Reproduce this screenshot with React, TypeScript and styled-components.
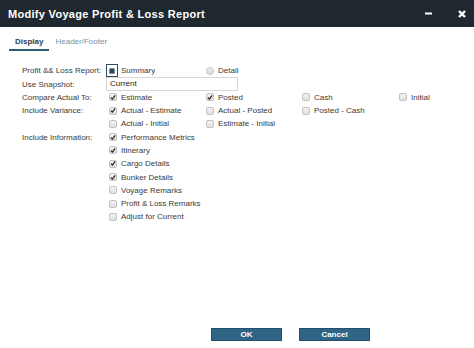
import styled, { createGlobalStyle } from "styled-components";

const GlobalStyle = createGlobalStyle`
  html, body {
    margin: 0;
    padding: 0;
    background: #fff;
  }
  body {
    font-family: "Liberation Sans", Arial, sans-serif;
    color: #3a3a3a;
  }
`;

const Window = styled.div`
  display: flex;
  flex-direction: column;
  width: 474px;
  height: 348px;
  background: #fff;
`;

const TitleBar = styled.div`
  display: flex;
  align-items: center;
  height: 27px;
  padding: 0 6px 0 8px;
  background: #1f282f;
  color: #fff;
`;

const Title = styled.h1`
  flex: 1;
  margin: 0;
  font-size: 11px;
  font-weight: 700;
  letter-spacing: 0.3px;
`;

const TitleButton = styled.button`
  all: unset;
  cursor: pointer;
  display: flex;
  align-items: center;
  justify-content: center;
  width: 12px;
  height: 12px;
  margin-left: 22px;
`;

const Tabs = styled.div`
  display: flex;
  padding: 10px 0 0 9px;
`;

const Tab = styled.div<{ $active?: boolean }>`
  padding: 0 6px 2px 6px;
  font-size: 8px;
  line-height: 10px;
  font-weight: ${({ $active }) => ($active ? 700 : 400)};
  color: ${({ $active }) => ($active ? "#2f4352" : "#7393aa")};
  border-bottom: 2px solid ${({ $active }) => ($active ? "#2b5c77" : "transparent")};
`;

const Form = styled.div`
  display: flex;
  flex-direction: column;
  padding: 13px 0 0 22px;
  font-size: 8px;
`;

const Row = styled.div`
  display: grid;
  grid-template-columns: 86px 97px 96px 97px 1fr;
  align-items: center;
  height: 13.3px;
`;

const Label = styled.span`
  color: #3a3a3a;
  white-space: nowrap;
`;

const Option = styled.label`
  display: flex;
  align-items: center;
  gap: 4px;
  padding-left: 1px;
  white-space: nowrap;
  color: #3a3a3a;
`;

const Box = styled.span`
  display: inline-flex;
  align-items: center;
  justify-content: center;
  box-sizing: border-box;
  width: 8px;
  height: 8px;
  border: 1px solid #c2c2c2;
  border-radius: 2px;
  background: linear-gradient(#f3f3f3, #dfdfdf);
`;

const Radio = styled.span`
  display: inline-block;
  box-sizing: border-box;
  width: 8px;
  height: 8px;
  border: 1px solid #c4c4c4;
  border-radius: 50%;
  background: linear-gradient(#f0f0f0, #d8d8d8);
`;

const FocusRing = styled.span`
  display: inline-flex;
  align-items: center;
  justify-content: center;
  box-sizing: border-box;
  width: 12px;
  height: 13px;
  margin-left: -3px;
  margin-right: -1px;
  border: 1.5px solid #2e4d61;
  background: #fff;
`;

const RadioDot = styled.span`
  display: inline-block;
  box-sizing: border-box;
  width: 6px;
  height: 6px;
  border-radius: 1px;
  background: #2e4556;
  border: 1px solid #7c8e9b;
`;

const TextInput = styled.div`
  box-sizing: border-box;
  width: 132px;
  height: 14px;
  margin-left: -2px;
  padding: 0 0 0 3px;
  border: 1px solid #d6d6d6;
  font-size: 8px;
  line-height: 12px;
  color: #222;
`;

const Spacer = styled.div`
  flex: 1;
`;

const Footer = styled.div`
  display: flex;
  gap: 17px;
  padding: 0 0 7px 211px;
`;

const Button = styled.button`
  all: unset;
  cursor: pointer;
  box-sizing: border-box;
  width: 71px;
  height: 13px;
  text-align: center;
  background: #2e6486;
  border: 1px solid #234f6a;
  color: #fff;
  font-size: 8px;
  font-weight: 700;
  line-height: 11px;
`;

function Check({ checked }: { checked?: boolean }) {
  return (
    <Box>
      {checked && (
        <svg width="7" height="7" viewBox="0 0 10 10">
          <path
            d="M1.5 5.2 L4 7.8 L8.6 1.6"
            fill="none"
            stroke="#1d1d1d"
            strokeWidth="2"
          />
        </svg>
      )}
    </Box>
  );
}

type Item = { label: string; checked?: boolean };

function CheckRow({ label, items }: { label?: string; items: Item[] }) {
  return (
    <Row>
      <Label>{label}</Label>
      {items.map((it, i) => (
        <Option key={i}>
          <Check checked={it.checked} />
          {it.label}
        </Option>
      ))}
    </Row>
  );
}

export default function App() {
  return (
    <>
      <GlobalStyle />
      <Window>
        <TitleBar>
          <Title>Modify Voyage Profit &amp; Loss Report</Title>
          <TitleButton aria-label="Minimize">
            <svg width="7" height="7" viewBox="0 0 7 7">
              <rect x="0" y="2.5" width="7" height="2" fill="#fff" />
            </svg>
          </TitleButton>
          <TitleButton aria-label="Close">
            <svg width="8" height="8" viewBox="0 0 8 8">
              <path d="M1 1 L7 7 M7 1 L1 7" stroke="#fff" strokeWidth="2.4" />
            </svg>
          </TitleButton>
        </TitleBar>

        <Tabs>
          <Tab $active>Display</Tab>
          <Tab>Header/Footer</Tab>
        </Tabs>

        <Form>
          <Row>
            <Label>Profit &amp;&amp; Loss Report:</Label>
            <Option>
              <FocusRing>
                <RadioDot />
              </FocusRing>
              Summary
            </Option>
            <Option>
              <Radio />
              Detail
            </Option>
          </Row>
          <Row>
            <Label>Use Snapshot:</Label>
            <TextInput>Current</TextInput>
          </Row>
          <CheckRow
            label="Compare Actual To:"
            items={[
              { label: "Estimate", checked: true },
              { label: "Posted", checked: true },
              { label: "Cash" },
              { label: "Initial" },
            ]}
          />
          <CheckRow
            label="Include Variance:"
            items={[
              { label: "Actual - Estimate", checked: true },
              { label: "Actual - Posted" },
              { label: "Posted - Cash" },
            ]}
          />
          <CheckRow
            items={[{ label: "Actual - Initial" }, { label: "Estimate - Initial" }]}
          />
          <CheckRow
            label="Include Information:"
            items={[{ label: "Performance Metrics", checked: true }]}
          />
          <CheckRow items={[{ label: "Itinerary", checked: true }]} />
          <CheckRow items={[{ label: "Cargo Details", checked: true }]} />
          <CheckRow items={[{ label: "Bunker Details", checked: true }]} />
          <CheckRow items={[{ label: "Voyage Remarks" }]} />
          <CheckRow items={[{ label: "Profit & Loss Remarks" }]} />
          <CheckRow items={[{ label: "Adjust for Current" }]} />
        </Form>

        <Spacer />

        <Footer>
          <Button>OK</Button>
          <Button>Cancel</Button>
        </Footer>
      </Window>
    </>
  );
}
